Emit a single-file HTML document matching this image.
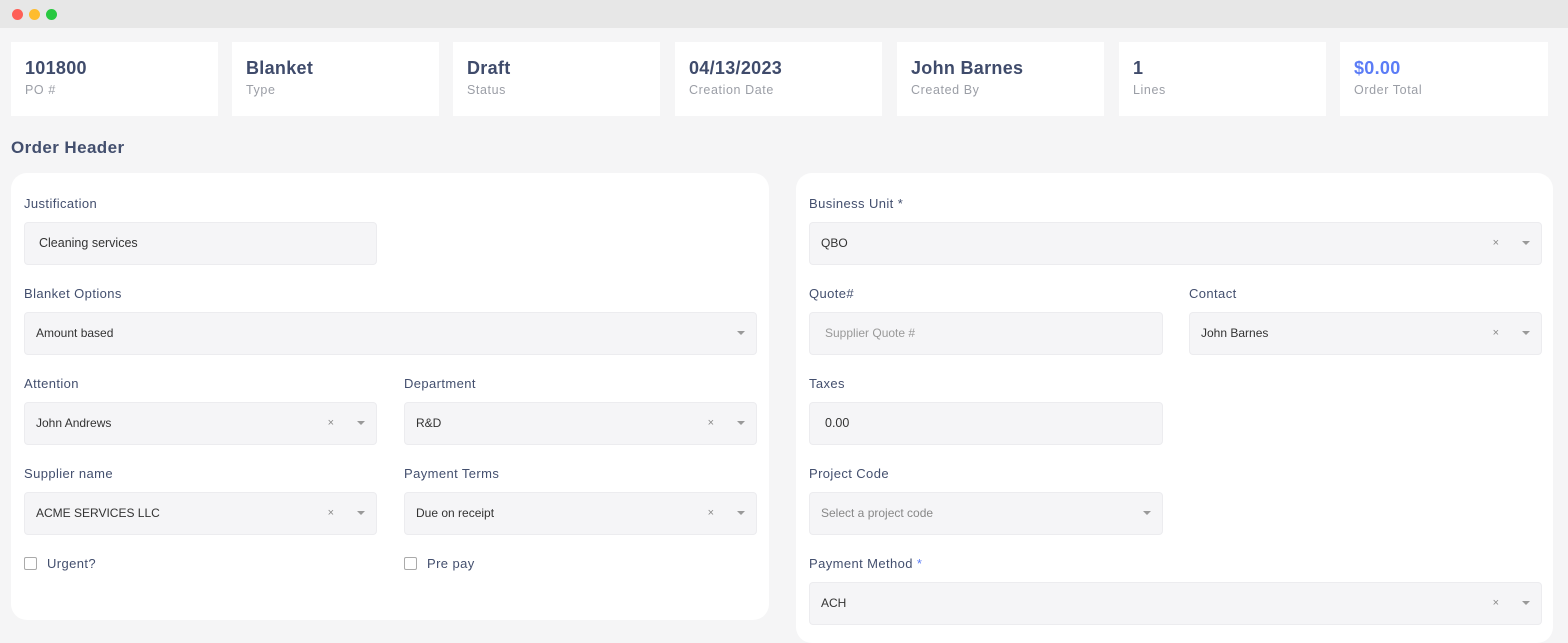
<!DOCTYPE html>
<html><head><style>
*{box-sizing:border-box;margin:0;padding:0}
body{width:1568px;height:630px;overflow:hidden;background:#f5f5f6;font-family:"Liberation Sans",sans-serif;position:relative}
.bar{position:absolute;left:0;top:0;width:1568px;height:28px;background:#e7e7e7}
.dot{position:absolute;top:9px;width:11px;height:11px;border-radius:50%}
.card{position:absolute;top:42px;height:74px;width:207px;background:#fff}
.card .v{position:absolute;left:14px;top:16px;font-size:18px;font-weight:bold;color:#3f4b6b;letter-spacing:.3px}
.card .l{position:absolute;left:14px;top:41px;font-size:12.5px;color:#9b9ea6;letter-spacing:.6px}
.h{position:absolute;left:11px;top:138px;font-size:17px;font-weight:bold;color:#434f6e;letter-spacing:.4px}
.panel{position:absolute;background:#fff;border-radius:16px}
.lab{position:absolute;font-size:13px;color:#434f6e;letter-spacing:.4px}
.in{position:absolute;height:43px;background:#f5f5f7;border:1px solid #ececef;border-radius:4px;font-size:12px;color:#333;padding-left:11px;line-height:41px}
.in .x{position:absolute;right:42px;top:0;color:#888;font-size:11px}
.in .c{position:absolute;right:11px;top:18px;width:0;height:0;border-left:4px solid transparent;border-right:4px solid transparent;border-top:4px solid #999}
.cb{position:absolute;width:13px;height:13px;border:1px solid #aaa;border-radius:2px;background:#fff}
</style></head><body>
<div class="bar"></div>
<div class="dot" style="left:12px;background:#fe5f57"></div>
<div class="dot" style="left:29px;background:#febc2e"></div>
<div class="dot" style="left:46px;background:#28c840"></div>

<div class="card" style="left:11px"><div class="v">101800</div><div class="l">PO #</div></div>
<div class="card" style="left:232px"><div class="v">Blanket</div><div class="l">Type</div></div>
<div class="card" style="left:453px"><div class="v">Draft</div><div class="l">Status</div></div>
<div class="card" style="left:675px"><div class="v">04/13/2023</div><div class="l">Creation Date</div></div>
<div class="card" style="left:897px"><div class="v">John Barnes</div><div class="l">Created By</div></div>
<div class="card" style="left:1119px"><div class="v">1</div><div class="l">Lines</div></div>
<div class="card" style="left:1340px;width:208px"><div class="v" style="color:#5b7cf6">$0.00</div><div class="l">Order Total</div></div>

<div class="h">Order Header</div>

<div class="panel" style="left:11px;top:173px;width:758px;height:447px"></div>
<div class="panel" style="left:796px;top:173px;width:757px;height:470px"></div>

<div class="lab" style="left:24px;top:196px">Justification</div>
<div class="in" style="left:24px;top:222px;width:353px;padding-left:14px;font-size:12.5px">Cleaning services</div>

<div class="lab" style="left:24px;top:286px">Blanket Options</div>
<div class="in" style="left:24px;top:312px;width:733px">Amount based<span class="c"></span></div>

<div class="lab" style="left:24px;top:376px">Attention</div>
<div class="in" style="left:24px;top:402px;width:353px">John Andrews<span class="x">×</span><span class="c"></span></div>
<div class="lab" style="left:404px;top:376px">Department</div>
<div class="in" style="left:404px;top:402px;width:353px">R&amp;D<span class="x">×</span><span class="c"></span></div>

<div class="lab" style="left:24px;top:466px">Supplier name</div>
<div class="in" style="left:24px;top:492px;width:353px">ACME SERVICES LLC<span class="x">×</span><span class="c"></span></div>
<div class="lab" style="left:404px;top:466px">Payment Terms</div>
<div class="in" style="left:404px;top:492px;width:353px">Due on receipt<span class="x">×</span><span class="c"></span></div>

<div class="cb" style="left:24px;top:557px"></div><div class="lab" style="left:47px;top:556px">Urgent?</div>
<div class="cb" style="left:404px;top:557px"></div><div class="lab" style="left:427px;top:556px">Pre pay</div>

<div class="lab" style="left:809px;top:196px">Business Unit *</div>
<div class="in" style="left:809px;top:222px;width:733px">QBO<span class="x">×</span><span class="c"></span></div>

<div class="lab" style="left:809px;top:286px">Quote#</div>
<div class="in" style="left:809px;top:312px;width:354px;padding-left:15px;color:#999">Supplier Quote #</div>
<div class="lab" style="left:1189px;top:286px">Contact</div>
<div class="in" style="left:1189px;top:312px;width:353px">John Barnes<span class="x">×</span><span class="c"></span></div>

<div class="lab" style="left:809px;top:376px">Taxes</div>
<div class="in" style="left:809px;top:402px;width:354px;padding-left:15px;font-size:12.5px">0.00</div>

<div class="lab" style="left:809px;top:466px">Project Code</div>
<div class="in" style="left:809px;top:492px;width:354px;color:#888">Select a project code<span class="c"></span></div>

<div class="lab" style="left:809px;top:556px">Payment Method <span style="color:#5b7cf6">*</span></div>
<div class="in" style="left:809px;top:582px;width:733px">ACH<span class="x">×</span><span class="c"></span></div>
</body></html>
